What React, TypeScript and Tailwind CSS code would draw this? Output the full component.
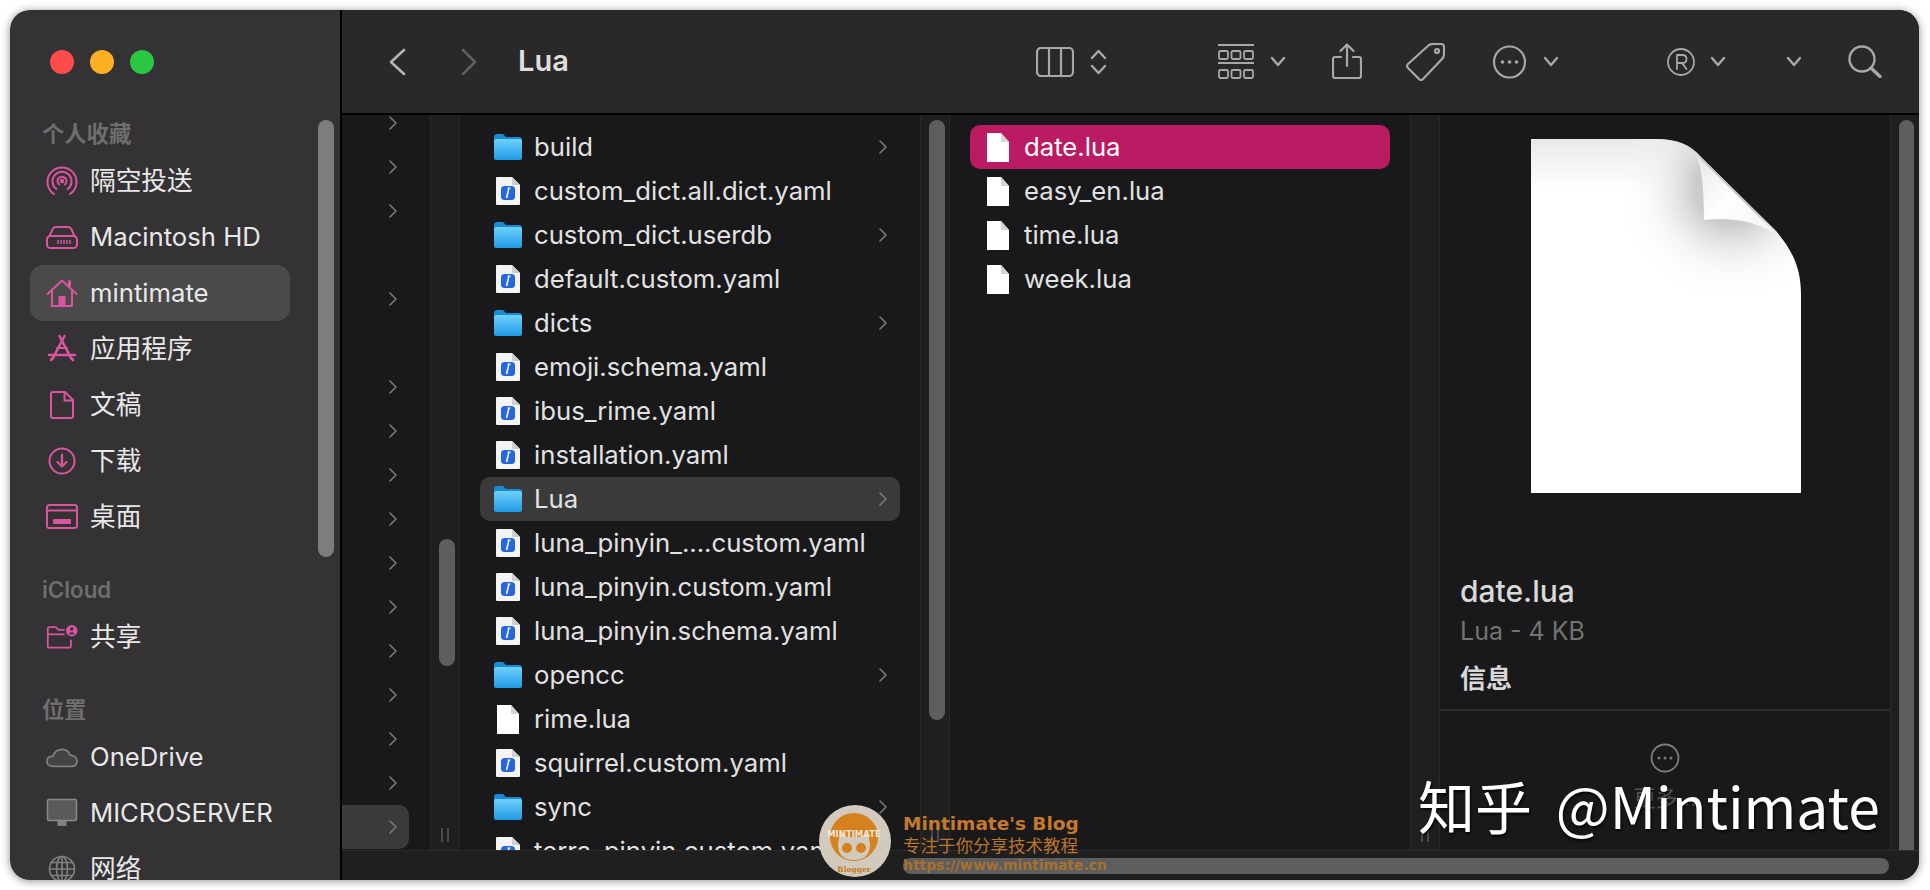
import React from 'react';

const pink = '#d9559f';

// sidebar icons, all drawn in a 32 box
const AirDropIcon = () => (
  <svg width="32" height="32" viewBox="0 0 32 32" fill="none" stroke={pink} strokeWidth="2" strokeLinecap="round">
    <path d="M8 29 A 14.5 14.5 0 1 1 24 29" />
    <path d="M10.5 24 A 9.5 9.5 0 1 1 21.5 24" />
    <path d="M13 19.5 A 4.5 4.5 0 1 1 19 19.5" />
    <circle cx="16" cy="16" r="1.3" fill={pink} />
  </svg>
);

const DriveIcon = () => (
  <svg width="32" height="32" viewBox="0 0 32 32" fill="none" stroke={pink} strokeWidth="2">
    <rect x="1" y="15" width="30" height="12" rx="3.5" />
    <path d="M3 16 L7 7.5 Q8 6 10 6 H22 Q24 6 25 7.5 L29 16" />
    <path d="M12 19 V23 M15 19 V23 M18 19 V23 M21 19 V23 M24 19 V23" strokeWidth="1.5" />
  </svg>
);

const HomeIcon = () => (
  <svg width="32" height="32" viewBox="0 0 32 32" fill="none" stroke={pink} strokeWidth="2" strokeLinejoin="round" strokeLinecap="round">
    <path d="M1.5 17 L16 3.5 L30.5 17" />
    <path d="M23.5 9 V4.5" strokeWidth="3" />
    <path d="M6 14 V29 H26 V14" />
    <rect x="12.5" y="19" width="7" height="10" fill={pink} stroke="none" />
  </svg>
);

const AppsIcon = () => (
  <svg width="32" height="32" viewBox="0 0 32 32" fill="none" stroke={pink} strokeWidth="2.6" strokeLinecap="round">
    <path d="M13.5 3 L25 25" />
    <path d="M18.5 3 L7 25" />
    <path d="M3 22 H29" />
    <path d="M11 15 H21" strokeWidth="2" />
    <path d="M5 27 L7 25 M27 27 L25 25" />
  </svg>
);

const DocIcon = () => (
  <svg width="32" height="32" viewBox="0 0 32 32" fill="none" stroke={pink} strokeWidth="2" strokeLinejoin="round">
    <path d="M5 5 Q5 3 7 3 H19 L27 11 V27 Q27 29 25 29 H7 Q5 29 5 27 Z" />
    <path d="M18.5 3 V11.5 H27" />
  </svg>
);

const DownloadIcon = () => (
  <svg width="32" height="32" viewBox="0 0 32 32" fill="none" stroke={pink} strokeWidth="2" strokeLinecap="round" strokeLinejoin="round">
    <circle cx="16" cy="16" r="12.5" />
    <path d="M16 9.5 V21.5 M11.5 17 L16 21.5 L20.5 17" strokeWidth="2.2" />
  </svg>
);

const DesktopIcon = () => (
  <svg width="32" height="32" viewBox="0 0 32 32" fill="none" stroke={pink} strokeWidth="2">
    <rect x="1" y="4" width="30" height="23" rx="2.5" />
    <path d="M1 9.5 H31" />
    <rect x="7" y="18" width="18" height="5" rx="0.5" fill={pink} stroke="none" />
  </svg>
);

const SharedIcon = () => (
  <svg width="36" height="32" viewBox="0 0 36 32" fill="none" stroke={pink} strokeWidth="2" strokeLinejoin="round">
    <path d="M2 26 V7 Q2 5 4 5 H11 L14 8 H21" />
    <path d="M2 13 H21" />
    <path d="M2 26 Q2 28 4 28 H26 Q28 28 28 26 V19" />
    <circle cx="29" cy="9" r="6.5" fill={pink} stroke="none" />
    <circle cx="29" cy="7" r="2" fill="#343234" stroke="none" />
    <path d="M25.5 13 Q29 8.5 32.5 13 Z" fill="#343234" stroke="none" />
  </svg>
);

const CloudIcon = () => (
  <svg width="34" height="32" viewBox="0 0 34 32" fill="none" stroke="#808080" strokeWidth="1.8">
    <path d="M8 26 Q1 26 1 20.5 Q1 15.5 7.5 15 Q10 8 17 8 Q23.5 8 25.5 14 Q33 14.5 33 20.5 Q33 26 27 26 Z" fill="#454345" />
  </svg>
);

const MonitorIcon = () => (
  <svg width="32" height="32" viewBox="0 0 32 32" fill="none">
    <rect x="1.5" y="2.5" width="29" height="21" rx="1.5" fill="#5a5a5a" stroke="#8a8a8a" strokeWidth="1.5" />
    <rect x="11.5" y="24" width="9" height="5" fill="#808080" />
  </svg>
);

const GlobeIcon = () => (
  <svg width="32" height="32" viewBox="0 0 32 32" fill="none" stroke="#808080" strokeWidth="1.6">
    <circle cx="16" cy="16" r="12.5" />
    <ellipse cx="16" cy="16" rx="5.5" ry="12.5" />
    <path d="M16 3.5 V28.5 M3.5 16 H28.5 M5.5 9.5 H26.5 M5.5 22.5 H26.5" />
  </svg>
);

const SidebarRow = ({ icon, label, active }: { icon: React.ReactNode; label: string; active?: boolean }) => (
  <div className={`flex h-[56px] w-[260px] items-center rounded-[13px] pl-[16px] ${active ? 'bg-[#4a4a4b]' : ''}`}>
    <div className="flex w-[32px] items-center justify-center">{icon}</div>
    <span className="ml-[12px] whitespace-nowrap text-[25.7px] text-[#e8e8e8]">{label}</span>
  </div>
);

const SidebarHeading = ({ label, className }: { label: string; className: string }) => (
  <div className={`flex h-[38px] items-center pl-[12px] text-[22.3px] font-semibold text-[#6e6e6e] ${className}`}>{label}</div>
);

// file list icons
const FolderIcon = () => (
  <svg width="28" height="26" viewBox="0 0 28 26">
    <defs>
      <linearGradient id="folderBody" x1="0" y1="0" x2="0" y2="1">
        <stop offset="0" stopColor="#6fd0fb" />
        <stop offset="1" stopColor="#219ae6" />
      </linearGradient>
    </defs>
    <path d="M0 3 Q0 0 3 0 H9 L12 3 H25 Q28 3 28 6 V10 H0 Z" fill="#1a8ad6" />
    <path d="M0 7 Q0 5 2 5 H26 Q28 5 28 7 V24 Q28 26 26 26 H2 Q0 26 0 24 Z" fill="url(#folderBody)" />
  </svg>
);

const PlainDoc = () => (
  <svg width="22" height="29" viewBox="0 0 22 29">
    <path d="M0 0 H14 L22 9 V29 H0 Z" fill="#ffffff" />
    <path d="M14 0 L22 9 H14 Z" fill="#d4d4d4" />
  </svg>
);

const YamlDoc = () => (
  <svg width="24" height="28" viewBox="0 0 24 28">
    <path d="M1 0 H16 L24 8 V27 Q24 28 23 28 H1 Q0 28 0 27 V1 Q0 0 1 0 Z" fill="#f4f4f4" />
    <path d="M16 0 L24 8 H16 Z" fill="#cfcfcf" />
    <rect x="5" y="9" width="14" height="14" rx="3.5" fill="#2566e0" />
    <path d="M13 11 L10.5 21" stroke="#ffffff" strokeWidth="1.5" />
    <path d="M11.5 11 H14.5" stroke="#ffffff" strokeWidth="1.1" />
  </svg>
);

const RowChevron = () => (
  <svg width="8" height="14" viewBox="0 0 8 14" fill="none" stroke="#7a7a7a" strokeWidth="1.6" strokeLinecap="round" strokeLinejoin="round">
    <path d="M1 1 L7 7 L1 13" />
  </svg>
);

type Entry = { name: string; kind: 'folder' | 'yaml' | 'doc' };

const entries: Entry[] = [
  { name: 'build', kind: 'folder' },
  { name: 'custom_dict.all.dict.yaml', kind: 'yaml' },
  { name: 'custom_dict.userdb', kind: 'folder' },
  { name: 'default.custom.yaml', kind: 'yaml' },
  { name: 'dicts', kind: 'folder' },
  { name: 'emoji.schema.yaml', kind: 'yaml' },
  { name: 'ibus_rime.yaml', kind: 'yaml' },
  { name: 'installation.yaml', kind: 'yaml' },
  { name: 'Lua', kind: 'folder' },
  { name: 'luna_pinyin_....custom.yaml', kind: 'yaml' },
  { name: 'luna_pinyin.custom.yaml', kind: 'yaml' },
  { name: 'luna_pinyin.schema.yaml', kind: 'yaml' },
  { name: 'opencc', kind: 'folder' },
  { name: 'rime.lua', kind: 'doc' },
  { name: 'squirrel.custom.yaml', kind: 'yaml' },
  { name: 'sync', kind: 'folder' },
  { name: 'terra_pinyin.custom.yaml', kind: 'yaml' },
];

const luaFiles = ['date.lua', 'easy_en.lua', 'time.lua', 'week.lua'];

// which rows of the far left column still show a chevron
const parentRows = [true, true, true, false, true, false, true, true, true, true, true, true, true, true, true, true, true];

const ColumnTrack = ({ thumb, thumbClass }: { thumb?: boolean; thumbClass?: string }) => (
  <div className="relative h-full w-[30px] shrink-0 border-x border-[#2b2b2b] bg-[#1f1f1f]">
    {thumb && <div className={`absolute left-[8px] w-[16px] rounded-full bg-[#5e5e5e] ${thumbClass}`} />}
    <div className="absolute bottom-[8px] left-[10px] flex gap-[4px]">
      <div className="h-[14px] w-[2px] bg-[#4a4a4a]" />
      <div className="h-[14px] w-[2px] bg-[#4a4a4a]" />
    </div>
  </div>
);

const ToolChevron = ({ className }: { className: string }) => (
  <svg className={className} width="16" height="11" viewBox="0 0 16 11" fill="none" stroke="#a8a8a8" strokeWidth="2.4" strokeLinecap="round" strokeLinejoin="round">
    <path d="M2 2 L8 9 L14 2" />
  </svg>
);

const Toolbar = () => (
  <div className="flex h-[105px] shrink-0 items-center border-b-2 border-black bg-[#2a292a]">
    <svg className="ml-[47px]" width="17" height="28" viewBox="0 0 17 28" fill="none" stroke="#b4b4b4" strokeWidth="2.6" strokeLinecap="round" strokeLinejoin="round">
      <path d="M15 2 L2 14 L15 26" />
    </svg>
    <svg className="ml-[55px]" width="16" height="28" viewBox="0 0 16 28" fill="none" stroke="#5e5e5e" strokeWidth="2.6" strokeLinecap="round" strokeLinejoin="round">
      <path d="M2 2 L14 14 L2 26" />
    </svg>
    <div className="ml-[41px] mb-[1px] w-[518px] text-[29px] font-semibold text-[#dedede]">Lua</div>
    <svg width="38" height="30" viewBox="0 0 38 30" fill="none" stroke="#a8a8a8" strokeWidth="2.2">
      <rect x="1" y="1" width="36" height="28" rx="4" />
      <path d="M13 1 V29 M25 1 V29" />
    </svg>
    <svg className="ml-[15px]" width="19" height="26" viewBox="0 0 19 26" fill="none" stroke="#a8a8a8" strokeWidth="2.4" strokeLinecap="round" strokeLinejoin="round">
      <path d="M3 9 L9.5 2 L16 9 M3 17 L9.5 24 L16 17" />
    </svg>
    <svg className="ml-[110px]" width="36" height="36" viewBox="0 0 36 36" fill="none" stroke="#a8a8a8" strokeWidth="1.8">
      <path d="M0 1 H36 M0 19 H36" strokeWidth="2.2" />
      <rect x="1" y="7" width="9" height="8" rx="1.5" />
      <rect x="13.5" y="7" width="9" height="8" rx="1.5" />
      <rect x="26" y="7" width="9" height="8" rx="1.5" />
      <rect x="1" y="26" width="9" height="8" rx="1.5" />
      <rect x="13.5" y="26" width="9" height="8" rx="1.5" />
      <rect x="26" y="26" width="9" height="8" rx="1.5" />
    </svg>
    <ToolChevron className="ml-[16px]" />
    <svg className="mb-[2px] ml-[46px]" width="30" height="36" viewBox="0 0 30 36" fill="none" stroke="#a8a8a8" strokeWidth="2.2" strokeLinecap="round" strokeLinejoin="round">
      <path d="M9 14 H3 Q1 14 1 16 V33 Q1 35 3 35 H27 Q29 35 29 33 V16 Q29 14 27 14 H21" />
      <path d="M15 23 V2 M8.5 8 L15 1.5 L21.5 8" />
    </svg>
    <svg className="ml-[44px]" width="39" height="38" viewBox="0 0 39 38" fill="none" stroke="#a8a8a8" strokeWidth="2.2" strokeLinejoin="round">
      <path d="M23 2 Q25 1 29 1 H35 Q38 1 38 4 V11 Q38 14 36 16 L17 36 Q15 38 13 36 L2 25 Q0 23 2 21 Z" />
      <circle cx="31" cy="8" r="2" />
    </svg>
    <svg className="ml-[47px]" width="35" height="34" viewBox="0 0 35 34" fill="none" stroke="#a8a8a8" strokeWidth="2.2">
      <circle cx="17.5" cy="17" r="15.5" />
      <circle cx="10.5" cy="17" r="1.8" fill="#a8a8a8" stroke="none" />
      <circle cx="17.5" cy="17" r="1.8" fill="#a8a8a8" stroke="none" />
      <circle cx="24.5" cy="17" r="1.8" fill="#a8a8a8" stroke="none" />
    </svg>
    <ToolChevron className="ml-[16px]" />
    <svg className="ml-[108px]" width="28" height="28" viewBox="0 0 28 28" fill="none" stroke="#a8a8a8" strokeWidth="1.8" strokeLinecap="round" strokeLinejoin="round">
      <circle cx="14" cy="14" r="13" />
      <path d="M10 21 V7 H15.5 Q19.5 7 19.5 11 Q19.5 15 15.5 15 H10 M15 15 L19.5 21" />
    </svg>
    <ToolChevron className="ml-[15px]" />
    <ToolChevron className="ml-[60px]" />
    <svg className="ml-[46px]" width="34" height="33" viewBox="0 0 34 33" fill="none" stroke="#a8a8a8" strokeWidth="2.4" strokeLinecap="round">
      <circle cx="14" cy="14" r="12.5" />
      <path d="M23 23 L32 31.5" strokeWidth="3.4" />
    </svg>
  </div>
);

const PageCurl = () => (
  <svg width="270" height="354" viewBox="0 0 270 354">
    <defs>
      <linearGradient id="pageTop" x1="0" y1="0" x2="0" y2="1">
        <stop offset="0" stopColor="#e9e9e9" />
        <stop offset="0.14" stopColor="#ffffff" />
      </linearGradient>
      <radialGradient id="curlShade" gradientUnits="userSpaceOnUse" cx="200" cy="50" r="115">
        <stop offset="0.3" stopColor="#bdbdbd" stopOpacity="0.8" />
        <stop offset="0.65" stopColor="#e8e8e8" stopOpacity="0.4" />
        <stop offset="1" stopColor="#ffffff" stopOpacity="0" />
      </radialGradient>
      <linearGradient id="flap" x1="0" y1="0" x2="1" y2="1">
        <stop offset="0" stopColor="#e4e4e4" />
        <stop offset="0.5" stopColor="#ffffff" />
        <stop offset="1" stopColor="#f2f2f2" />
      </linearGradient>
    </defs>
    <path d="M0 0 H126 C146 0 160 6 170 18 L245 92 C262 112 270 130 270 155 V354 H0 Z" fill="url(#pageTop)" />
    <path d="M0 0 H126 C146 0 160 6 170 18 L245 92 C262 112 270 130 270 155 V354 H0 Z" fill="url(#curlShade)" />
    <path d="M163 14 C171 24 173 50 173 81 C200 78 224 82 245 95 Z" fill="url(#flap)" />
  </svg>
);

const Watermark = () => (
  <div className="absolute left-[818px] top-[804px] flex font-['DejaVu_Sans','Noto_Sans_CJK_SC',sans-serif]">
    <svg width="74" height="74" viewBox="0 0 74 74">
      <circle cx="37" cy="37" r="36" fill="#d2cbbd" />
      <circle cx="36" cy="33" r="24" fill="#d5811f" />
      <path d="M20 40 L22 29 L29 33 H43 L50 29 L52 40 Q52 56 36 56 Q20 56 20 40 Z" fill="#d2cbbd" />
      <circle cx="29" cy="44" r="5" fill="#d5811f" />
      <circle cx="43" cy="44" r="5" fill="#d5811f" />
      <text x="36" y="33" textAnchor="middle" fontSize="8.5" fontWeight="700" fill="#f1e7d4" fontFamily="DejaVu Sans">MINTIMATE</text>
      <text x="36" y="68" textAnchor="middle" fontSize="7.5" fontWeight="700" fill="#c47a20" fontFamily="DejaVu Serif">Blogger</text>
    </svg>
    <div className="ml-[11px] mt-[8px] flex flex-col">
      <span className="text-[18.5px] font-bold leading-[24px] text-[#c5792a]">Mintimate's Blog</span>
      <span className="text-[17.5px] leading-[20px] text-[#b9752a]">专注于你分享技术教程</span>
      <span className="text-[13.9px] font-bold leading-[18px] text-[#a8702d]">https://www.mintimate.cn</span>
    </div>
  </div>
);

export default function App() {
  return (
    <div className="relative h-[890px] w-full overflow-hidden bg-white pb-[10px] pl-[10px] pr-[11px] pt-[10px] font-['Inter','Noto_Sans_CJK_SC',sans-serif]">
      <div className="relative flex h-full overflow-hidden rounded-[20px] shadow-[0_1px_9px_rgba(0,0,0,0.45)]">
        {/* Sidebar */}
        <div className="relative w-[332px] shrink-0 overflow-hidden border-r-2 border-black bg-[#343234] pl-[20px]">
          <div className="flex h-[104px] items-center gap-[16px] pl-[20px]">
            <div className="h-[24px] w-[24px] rounded-full bg-[#fe4c4b]" />
            <div className="h-[24px] w-[24px] rounded-full bg-[#fdb024]" />
            <div className="h-[24px] w-[24px] rounded-full bg-[#2ac840]" />
          </div>
          <SidebarHeading label="个人收藏" className="h-[39px]" />
          <SidebarRow icon={<AirDropIcon />} label="隔空投送" />
          <SidebarRow icon={<DriveIcon />} label="Macintosh HD" />
          <SidebarRow icon={<HomeIcon />} label="mintimate" active />
          <SidebarRow icon={<AppsIcon />} label="应用程序" />
          <SidebarRow icon={<DocIcon />} label="文稿" />
          <SidebarRow icon={<DownloadIcon />} label="下载" />
          <SidebarRow icon={<DesktopIcon />} label="桌面" />
          <SidebarHeading label="iCloud" className="mt-[26px]" />
          <SidebarRow icon={<SharedIcon />} label="共享" />
          <SidebarHeading label="位置" className="mt-[26px]" />
          <SidebarRow icon={<CloudIcon />} label="OneDrive" />
          <SidebarRow icon={<MonitorIcon />} label="MICROSERVER" />
          <SidebarRow icon={<GlobeIcon />} label="网络" />
          <div className="absolute left-[308px] top-[110px] h-[437px] w-[16px] rounded-full bg-[#7e7d7e]" />
        </div>

        {/* Main */}
        <div className="flex min-w-0 flex-1 flex-col bg-[#19181a]">
          <Toolbar />
          <div className="flex min-h-0 flex-1 overflow-hidden">
            <div className="h-full w-[88px] shrink-0 overflow-hidden">
              <div className="mt-[-14px]">
                {parentRows.map((show, i) => (
                  <div key={i} className={`flex h-[44px] items-center justify-end ${i === 16 ? 'mr-[21px] rounded-r-[10px] bg-[#3a3a3b] pr-[12px]' : 'pr-[33px]'}`}>
                    {show && <RowChevron />}
                  </div>
                ))}
              </div>
            </div>
            <ColumnTrack thumb thumbClass="top-[424px] h-[127px]" />

            <div className="h-full w-[460px] shrink-0 overflow-hidden pl-[20px] pr-[20px] pt-[10px]">
              {entries.map((entry) => (
                <div key={entry.name} className={`flex h-[44px] items-center rounded-[10px] pl-[14px] pr-[13px] ${entry.name === 'Lua' ? 'bg-[#3a3a3b]' : ''}`}>
                  <div className="flex w-[28px] shrink-0 items-center justify-center">
                    {entry.kind === 'folder' && <FolderIcon />}
                    {entry.kind === 'yaml' && <YamlDoc />}
                    {entry.kind === 'doc' && <PlainDoc />}
                  </div>
                  <span className="ml-[12px] flex-1 whitespace-nowrap text-[25.7px] text-[#e2e2e2]">{entry.name}</span>
                  {entry.kind === 'folder' && <RowChevron />}
                </div>
              ))}
            </div>
            <ColumnTrack thumb thumbClass="top-[5px] h-[600px]" />

            <div className="h-full w-[460px] shrink-0 overflow-hidden pl-[20px] pr-[20px] pt-[10px]">
              {luaFiles.map((name, i) => (
                <div key={name} className={`flex h-[44px] items-center rounded-[10px] pl-[17px] ${i === 0 ? 'bg-[#bb1b62]' : ''}`}>
                  <PlainDoc />
                  <span className={`ml-[15px] text-[25.7px] ${i === 0 ? 'text-white' : 'text-[#e2e2e2]'}`}>{name}</span>
                </div>
              ))}
            </div>
            <ColumnTrack />

            {/* Preview */}
            <div className="h-full w-[450px] shrink-0 overflow-hidden">
              <div className="flex justify-center pl-[2px] pt-[24px]">
                <PageCurl />
              </div>
              <div className="mt-[78px] pl-[20px]">
                <div className="text-[30px] font-medium leading-[40px] text-[#d8d8d8]">date.lua</div>
                <div className="text-[25px] leading-[40px] text-[#737373]">Lua - 4 KB</div>
                <div className="mt-[8px] text-[26px] font-bold leading-[40px] text-[#d8d8d8]">信息</div>
              </div>
              <div className="mt-[10px] h-[2px] bg-[#2c2c2c]" />
              <div className="mt-[32px] flex flex-col items-center">
                <svg width="30" height="30" viewBox="0 0 30 30" fill="none" stroke="#7c7c7c" strokeWidth="1.8">
                  <circle cx="15" cy="15" r="13.5" />
                  <circle cx="9" cy="15" r="1.5" fill="#7c7c7c" stroke="none" />
                  <circle cx="15" cy="15" r="1.5" fill="#7c7c7c" stroke="none" />
                  <circle cx="21" cy="15" r="1.5" fill="#7c7c7c" stroke="none" />
                </svg>
                <div className="mt-[11px] text-[22px] leading-[28px] text-[#555555]">更多...</div>
              </div>
            </div>

            <div className="relative h-full flex-1 border-l border-[#2b2b2b] bg-[#1f1f1f]">
              <div className="absolute bottom-0 left-[8px] top-[5px] w-[15px] rounded-t-full bg-[#5e5e5e]" />
            </div>
          </div>

          {/* Horizontal scroller */}
          <div className="h-[30px] shrink-0 border-t border-[#2c2c2c] bg-[#201f20] pb-[5px] pl-[561px] pr-[30px] pt-[7px]">
            <div className="h-[16px] rounded-full bg-[#5e5e5e]" />
          </div>
        </div>
      </div>

      <Watermark />
      <div className="absolute left-[1418px] top-[763px] whitespace-nowrap font-['Noto_Sans_CJK_SC',sans-serif] text-[57px] leading-[82px] text-white [word-spacing:11px] [text-shadow:1px_2px_3px_rgba(0,0,0,0.8)]">
        知乎 @Mintimate
      </div>
    </div>
  );
}
